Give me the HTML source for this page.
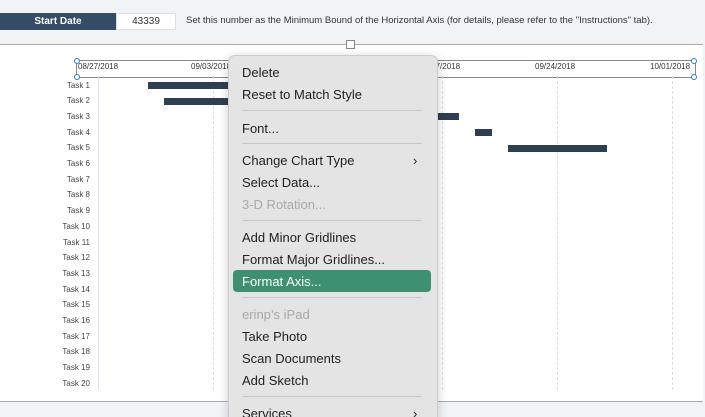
<!DOCTYPE html><html style="width:705px;height:417px;overflow:hidden"><head><style>
body{margin:0;width:705px;height:417px;overflow:hidden;background:#f1f4f7;font-family:"Liberation Sans",sans-serif;position:relative}
.a{position:absolute}
.t{font-size:8px;color:#444;text-align:right;width:60px;left:30px}
.d{font-size:8px;color:#333}
.g{border-left:1px dashed #ddd;top:76px;height:314px;width:0}
.b{background:#2e3f52;height:7px}
.m{position:absolute;left:242px;font-size:13px;color:#222;line-height:16px}
.s{position:absolute;left:242px;width:180px;height:1px;background:#c8c8c8}
</style></head><body>
<div class="a" style="left:0;top:13px;width:116px;height:17px;background:#344c66;color:#fff;font-size:10px;font-weight:bold;line-height:17px;text-align:center">Start Date</div>
<div class="a" style="left:116px;top:13px;width:58px;height:15px;background:#fff;border:1px solid #ddd;font-size:10px;line-height:15px;text-align:center;color:#333">43339</div>
<div class="a" style="left:186px;top:15px;font-size:9.5px;color:#333;white-space:nowrap">Set this number as the Minimum Bound of the Horizontal Axis (for details, please refer to the "Instructions" tab).</div>
<div class="a" style="left:0;top:44px;width:703px;height:356px;background:#fff;border-top:1px solid #aaa;border-bottom:1px solid #aaa"></div>
<div class="a" style="left:346px;top:40px;width:7px;height:7px;background:#fff;border:1px solid #888"></div>
<div class="a" style="left:76px;top:60px;width:618px;height:16px;border:1px solid #888"></div>
<div class="a" style="left:74px;top:58px;width:4px;height:4px;border:1px solid #2a7be4;border-radius:50%;background:#fff"></div>
<div class="a" style="left:74px;top:74px;width:4px;height:4px;border:1px solid #2a7be4;border-radius:50%;background:#fff"></div>
<div class="a" style="left:691px;top:58px;width:4px;height:4px;border:1px solid #2a7be4;border-radius:50%;background:#fff"></div>
<div class="a" style="left:691px;top:74px;width:4px;height:4px;border:1px solid #2a7be4;border-radius:50%;background:#fff"></div>
<div class="a d" style="left:78px;top:62px">08/27/2018</div>
<div class="a d" style="left:191px;top:62px">09/03/2018</div>
<div class="a d" style="left:420px;top:62px">09/17/2018</div>
<div class="a d" style="left:535px;top:62px">09/24/2018</div>
<div class="a d" style="left:650px;top:62px">10/01/2018</div>
<div class="a" style="left:98px;top:76px;width:1px;height:314px;background:#dde"></div>
<div class="a g" style="left:213px"></div><div class="a g" style="left:442px"></div><div class="a g" style="left:557px"></div><div class="a g" style="left:672px"></div>
<div class="a b" style="left:148px;top:82px;width:90px"></div>
<div class="a b" style="left:164px;top:98px;width:74px"></div>
<div class="a b" style="left:430px;top:113px;width:29px"></div>
<div class="a b" style="left:475px;top:129px;width:17px"></div>
<div class="a b" style="left:508px;top:145px;width:99px"></div>
<div class="a t" style="top:81px">Task 1</div><div class="a t" style="top:96px">Task 2</div><div class="a t" style="top:112px">Task 3</div><div class="a t" style="top:128px">Task 4</div><div class="a t" style="top:143px">Task 5</div><div class="a t" style="top:159px">Task 6</div><div class="a t" style="top:175px">Task 7</div><div class="a t" style="top:190px">Task 8</div><div class="a t" style="top:206px">Task 9</div><div class="a t" style="top:222px">Task 10</div><div class="a t" style="top:238px">Task 11</div><div class="a t" style="top:253px">Task 12</div><div class="a t" style="top:269px">Task 13</div><div class="a t" style="top:285px">Task 14</div><div class="a t" style="top:300px">Task 15</div><div class="a t" style="top:316px">Task 16</div><div class="a t" style="top:332px">Task 17</div><div class="a t" style="top:347px">Task 18</div><div class="a t" style="top:363px">Task 19</div><div class="a t" style="top:379px">Task 20</div>
<div class="a" style="left:228px;top:55px;width:208px;height:370px;background:#e4e4e4;border:1px solid #ccc;border-radius:7px;box-shadow:0 2px 10px rgba(0,0,0,.2)"></div>
<div class="a" style="left:233px;top:270px;width:198px;height:22px;background:#3d9170;border-radius:4px"></div>
<div class="m" style="top:65px">Delete</div>
<div class="m" style="top:87px">Reset to Match Style</div>
<div class="s" style="top:110px"></div>
<div class="m" style="top:121px">Font...</div>
<div class="s" style="top:143px"></div>
<div class="m" style="top:153px">Change Chart Type</div><div class="m" style="left:413px;top:153px">›</div>
<div class="m" style="top:175px">Select Data...</div>
<div class="m" style="top:197px;color:#a8a8a8">3-D Rotation...</div>
<div class="s" style="top:220px"></div>
<div class="m" style="top:230px">Add Minor Gridlines</div>
<div class="m" style="top:252px">Format Major Gridlines...</div>
<div class="m" style="top:274px;color:#fff">Format Axis...</div>
<div class="s" style="top:297px"></div>
<div class="m" style="top:307px;color:#a8a8a8">erinp’s iPad</div>
<div class="m" style="top:329px">Take Photo</div>
<div class="m" style="top:351px">Scan Documents</div>
<div class="m" style="top:373px">Add Sketch</div>
<div class="s" style="top:396px"></div>
<div class="m" style="top:406px">Services</div><div class="m" style="left:413px;top:406px">›</div>
</body></html>
